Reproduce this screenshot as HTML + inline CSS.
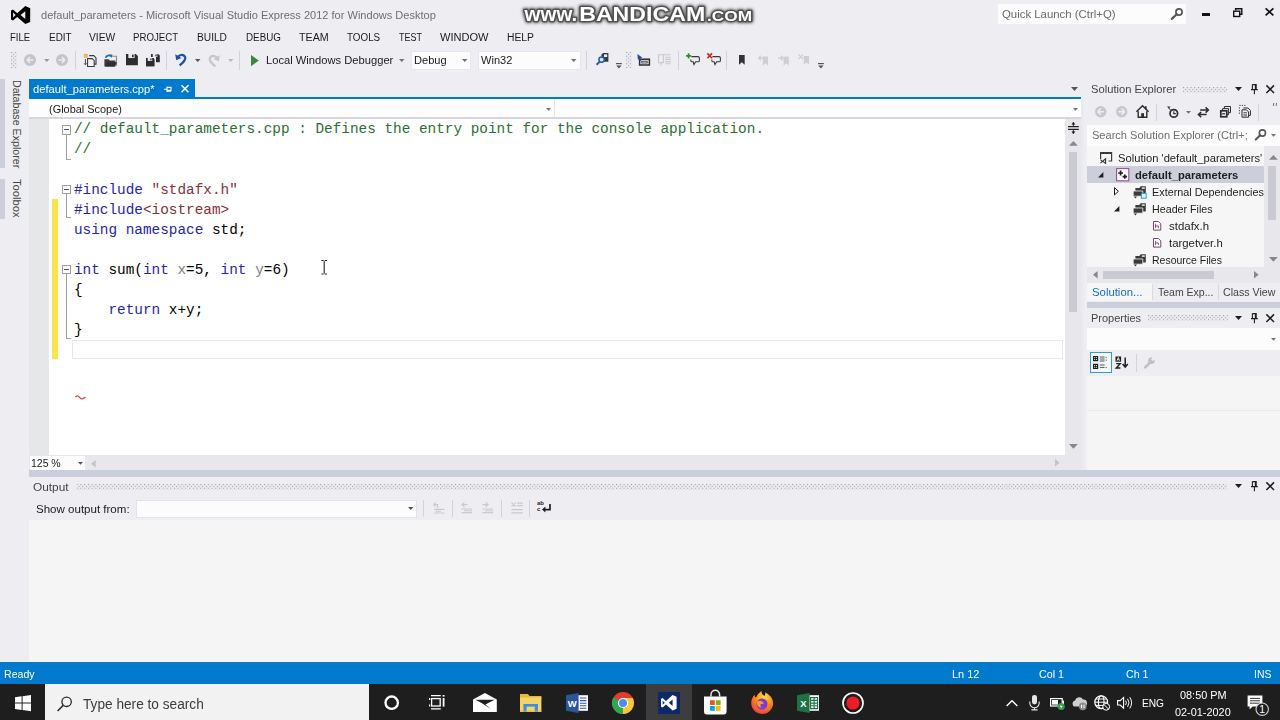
<!DOCTYPE html>
<html><head><meta charset="utf-8"><title>default_parameters - Microsoft Visual Studio Express 2012 for Windows Desktop</title>
<style>
*{box-sizing:border-box;margin:0;padding:0}
html,body{width:1280px;height:720px;overflow:hidden;background:#eeeef2;font-family:"Liberation Sans",sans-serif;font-size:11.25px;color:#1e1e1e}
.a{position:absolute;white-space:nowrap}
.t{position:absolute;white-space:nowrap;line-height:16px;height:16px}
.code{position:absolute;white-space:pre;font-family:"Liberation Mono",monospace;font-size:14.39px;line-height:20px;height:20px;left:73.9px;color:#000}
.kw{color:#2626a8}.cm{color:#2a7032}.st{color:#86303a}.gr{color:#808080}
svg{position:absolute;overflow:visible}
</style></head><body>
<svg style="left:11px;top:5.8px;" width="19.2" height="18.1" viewBox="0 0 19.2 18.1"><path fill="#000" fill-rule="evenodd" d="M14.3,0 L19.2,2.2 V15.9 L14.3,18.1 L6.2,10.9 L2,14.6 L0,13.6 V4.5 L2,3.5 L6.2,7.2 Z M14.3,5.2 L9.6,9.05 L14.3,12.9 Z M2.1,6.6 V11.5 L4.7,9.05 Z"/></svg>
<div class="t" id="title" style="left:41.34px;top:6.95px;font-size:11.7px;color:#6f6f6f;transform-origin:0 0;transform:scaleX(0.9442);">default_parameters - Microsoft Visual Studio Express 2012 for Windows Desktop</div>
<div class="a" style="left:998px;top:3.5px;width:188px;height:20px;background:#fcfcfc;"></div>
<div class="t" id="ql" style="left:1002.12px;top:6.02px;font-size:11.5px;color:#6a6a6a;transform-origin:0 0;transform:scaleX(0.9898);">Quick Launch (Ctrl+Q)</div>
<svg style="left:1171px;top:8px;" width="12" height="11.5" viewBox="0 0 12 11.5"><circle cx="8" cy="4" r="3.1" fill="none" stroke="#555" stroke-width="1.7"/><path d="M5.8,6.2 L0.8,10.9" stroke="#555" stroke-width="2.2" stroke-linecap="round"/></svg>
<div class="a" style="left:1202px;top:13.2px;width:8.2px;height:2.8px;background:#111;"></div>
<svg style="left:1233px;top:8px;" width="9.5" height="9.2" viewBox="0 0 9.5 9.2"><path d="M2.6,2.6V0.7H8.8V6.2H6.8" fill="none" stroke="#111" stroke-width="1.4"/><rect x="0.7" y="3.2" width="6" height="5.3" fill="none" stroke="#111" stroke-width="1.4"/></svg>
<svg style="left:1265px;top:8.4px;" width="9" height="7.8" viewBox="0 0 9 7.8"><path d="M0.6,0.3 L8.4,7.5 M8.4,0.3 L0.6,7.5" stroke="#111" stroke-width="1.7" fill="none"/></svg>
<svg style="left:0px;top:0px;" width="1280" height="30" viewBox="0 0 1280 30"><g font-family="Liberation Sans,sans-serif" font-weight="bold" fill="#fff" stroke="#505050" stroke-width="2.6" stroke-linejoin="round" paint-order="stroke" lengthAdjust="spacingAndGlyphs" style="filter:drop-shadow(0 0 1.5px #555) drop-shadow(0 0 1.5px #888)"><text x="524.6" y="21" font-size="19.5" textLength="52.6" lengthAdjust="spacingAndGlyphs">www.</text><text x="579.2" y="21" font-size="19.5" textLength="126" lengthAdjust="spacingAndGlyphs">BANDICAM</text><text x="707" y="21" font-size="14.4" textLength="45" lengthAdjust="spacingAndGlyphs">.COM</text></g></svg>
<div class="t" id="m0" style="left:9.93px;top:29.35px;font-size:11.25px;color:#1b1b1b;transform-origin:0 0;transform:scaleX(0.8476);">FILE</div>
<div class="t" id="m1" style="left:48.65px;top:29.35px;font-size:11.25px;color:#1b1b1b;transform-origin:0 0;transform:scaleX(0.8851);">EDIT</div>
<div class="t" id="m2" style="left:88.88px;top:29.35px;font-size:11.25px;color:#1b1b1b;transform-origin:0 0;transform:scaleX(0.9119);">VIEW</div>
<div class="t" id="m3" style="left:133.42px;top:29.35px;font-size:11.25px;color:#1b1b1b;transform-origin:0 0;transform:scaleX(0.8600);">PROJECT</div>
<div class="t" id="m4" style="left:196.89px;top:29.35px;font-size:11.25px;color:#1b1b1b;transform-origin:0 0;transform:scaleX(0.9044);">BUILD</div>
<div class="t" id="m5" style="left:245.66px;top:29.35px;font-size:11.25px;color:#1b1b1b;transform-origin:0 0;transform:scaleX(0.8729);">DEBUG</div>
<div class="t" id="m6" style="left:299.36px;top:29.35px;font-size:11.25px;color:#1b1b1b;transform-origin:0 0;transform:scaleX(0.9527);">TEAM</div>
<div class="t" id="m7" style="left:347.41px;top:29.35px;font-size:11.25px;color:#1b1b1b;transform-origin:0 0;transform:scaleX(0.8746);">TOOLS</div>
<div class="t" id="m8" style="left:398.96px;top:29.35px;font-size:11.25px;color:#1b1b1b;transform-origin:0 0;transform:scaleX(0.8025);">TEST</div>
<div class="t" id="m9" style="left:440.09px;top:29.35px;font-size:11.25px;color:#1b1b1b;transform-origin:0 0;transform:scaleX(0.9839);">WINDOW</div>
<div class="t" id="m10" style="left:506.88px;top:29.35px;font-size:11.25px;color:#1b1b1b;transform-origin:0 0;transform:scaleX(0.9183);">HELP</div>
<svg style="left:10.8px;top:52px;" width="5.6" height="16" viewBox="0 0 5.6 16"><defs><pattern id="g1" width="3.75" height="3.75" patternUnits="userSpaceOnUse"><rect x="0" y="0" width="1.1" height="1.1" fill="#9a9aa0"/><rect x="1.87" y="1.87" width="1.1" height="1.1" fill="#9a9aa0"/></pattern></defs><rect width="5.6" height="16" fill="url(#g1)"/></svg>
<svg style="left:24px;top:54.25px;" width="12" height="12" viewBox="-6 -6 12 12"><circle cx="0" cy="0" r="6" fill="#c4c4c8"/><path d="M-3,0 L0.2,-3 M-3,0 L0.2,3 M-3,0 H3.4" stroke="#eeeef2" stroke-width="1.6" fill="none"/></svg>
<svg style="left:43.5px;top:59.1px;" width="5.5" height="3" viewBox="0 0 5.5 3"><path d="M0,0H5.5L2.75,3Z" fill="#9a9a9e"/></svg>
<svg style="left:56px;top:54.25px;" width="12" height="12" viewBox="-6 -6 12 12"><circle cx="0" cy="0" r="6" fill="#c4c4c8"/><path d="M3,0 L-0.2,-3 M3,0 L-0.2,3 M3,0 H-3.4" stroke="#eeeef2" stroke-width="1.6" fill="none"/></svg>
<div class="a" style="left:74.9px;top:51px;width:1px;height:18.5px;background:#d2d2d8;"></div>
<svg style="left:84px;top:53.7px;" width="12.5" height="13" viewBox="0 0 12.5 13"><path d="M0.3,0.3h3v3h-3z" fill="#e8c36a" stroke="#c89b3c" stroke-width="0.6"/><path d="M5.2,1.6 h4.6 l2.2,2.3 v6.2 h-2" fill="none" stroke="#3a3a3a" stroke-width="1.1"/><path d="M3.6,4.6 h4.6 l2,2.1 v5.8 h-6.6 z" fill="#fafafa" stroke="#3a3a3a" stroke-width="1.1"/><path d="M1.4,5 v5.6 M0.2,9.4 l1.2,1.4 l1.2,-1.4" fill="none" stroke="#3a3a3a" stroke-width="0.9"/></svg>
<svg style="left:104.4px;top:53.6px;" width="13.8" height="13" viewBox="0 0 13.8 13"><path d="M8.2,2.2 h4.3 v9.6" fill="none" stroke="#8a8a8a" stroke-width="1.1"/><path d="M0.4,12.6 V5.2 H4.6 L5.8,6.6 H11.4 V12.6 Z" fill="#3a3a3a"/><path d="M1.2,12.6 L3.4,8.2 H13 L10.8,12.6 Z" fill="#2d2d2d"/><path d="M1.6,3.9 a3.3,3.3 0 0 1 5.4,-1.6" fill="none" stroke="#1b6fc2" stroke-width="1.7"/><path d="M5.4,0.2 L8.6,0.8 L7.6,4.0 Z" fill="#1b6fc2"/></svg>
<svg style="left:125.6px;top:54.3px;" width="11.9" height="11.305" viewBox="0 0 11.9 11.305"><path d="M0,0 H9.758 L11.9,2.023 V11.305 H0 Z" fill="#2d2d2d"/><rect x="2.3800000000000003" y="0" width="6.188000000000001" height="4.046" fill="#eeeef2"/><rect x="5.95" y="0.5950000000000001" width="1.6660000000000001" height="2.618" fill="#2d2d2d"/></svg>
<svg style="left:150.6px;top:53.7px;" width="8.8" height="8.36" viewBox="0 0 8.8 8.36"><path d="M0,0 H7.216 L8.8,1.4960000000000002 V8.36 H0 Z" fill="#2d2d2d"/><rect x="1.7600000000000002" y="0" width="4.5760000000000005" height="2.9920000000000004" fill="#eeeef2"/><rect x="4.4" y="0.44000000000000006" width="1.2320000000000002" height="1.9360000000000002" fill="#2d2d2d"/></svg>
<div class="a" style="left:149.3px;top:56.5px;width:1.3px;height:6.5px;background:#eeeef2;"></div>
<svg style="left:145.6px;top:58.1px;" width="8.8" height="8.36" viewBox="0 0 8.8 8.36"><path d="M0,0 H7.216 L8.8,1.4960000000000002 V8.36 H0 Z" fill="#2d2d2d"/><rect x="1.7600000000000002" y="0" width="4.5760000000000005" height="2.9920000000000004" fill="#eeeef2"/><rect x="4.4" y="0.44000000000000006" width="1.2320000000000002" height="1.9360000000000002" fill="#2d2d2d"/></svg>
<div class="a" style="left:145.6px;top:57px;width:10px;height:1.1px;background:#eeeef2;"></div>
<div class="a" style="left:154.4px;top:58.1px;width:1.2px;height:8.9px;background:#eeeef2;"></div>
<svg style="left:145.6px;top:58.3px;" width="8.6" height="8.17" viewBox="0 0 8.6 8.17"><path d="M0,0 H7.052 L8.6,1.462 V8.17 H0 Z" fill="#2d2d2d"/><rect x="1.72" y="0" width="4.4719999999999995" height="2.924" fill="#eeeef2"/><rect x="4.3" y="0.43" width="1.204" height="1.892" fill="#2d2d2d"/></svg>
<div class="a" style="left:165.75px;top:51px;width:1px;height:18.5px;background:#d2d2d8;"></div>
<svg style="left:175px;top:53.3px;" width="12" height="13.2" viewBox="0 0 12 13.2"><path d="M2.4,5.0 C3.4,1.6 8.6,0.6 10.2,4.2 C11.2,7.0 8.0,9.6 4.6,12.4" fill="none" stroke="#1c4fa6" stroke-width="2.2"/><path d="M0.2,1.2 L1.2,7.2 L6.4,5.0 Z" fill="#1c4fa6"/></svg>
<svg style="left:194.75px;top:59.1px;" width="5.5" height="3" viewBox="0 0 5.5 3"><path d="M0,0H5.5L2.75,3Z" fill="#555"/></svg>
<svg style="left:207.6px;top:53.6px;" width="12" height="13" viewBox="0 0 12 13"><path d="M9.6,5.0 C8.6,1.6 3.4,0.6 1.8,4.2 C0.8,7.0 4.0,9.6 7.4,12.4" fill="none" stroke="#c6c6ca" stroke-width="2.2"/><path d="M11.8,1.2 L10.8,7.2 L5.6,5.0 Z" fill="#c6c6ca"/></svg>
<svg style="left:227.85px;top:59.1px;" width="5.5" height="3" viewBox="0 0 5.5 3"><path d="M0,0H5.5L2.75,3Z" fill="#b8b8bd"/></svg>
<div class="a" style="left:239.1px;top:51px;width:1px;height:18.5px;background:#d2d2d8;"></div>
<svg style="left:251.2px;top:54.6px;" width="7.8" height="11.2" viewBox="0 0 7.8 11.2"><path d="M0,0 L7.8,5.6 L0,11.2 Z" fill="#36883a"/></svg>
<div class="t" id="lwd" style="left:266.33px;top:51.80px;font-size:11.4px;color:#1b1b1b;transform-origin:0 0;transform:scaleX(0.9811);">Local Windows Debugger</div>
<svg style="left:399.15px;top:59.1px;" width="5.5" height="3" viewBox="0 0 5.5 3"><path d="M0,0H5.5L2.75,3Z" fill="#717171"/></svg>
<div class="a" style="left:410.6px;top:50.6px;width:60px;height:19.4px;background:#fcfcfc;border:1px solid #e6e6ec;"></div>
<div class="t" id="dbg" style="left:414.23px;top:51.80px;font-size:11.4px;color:#1b1b1b;transform-origin:0 0;transform:scaleX(0.9733);">Debug</div>
<svg style="left:462.25px;top:59.1px;" width="5.5" height="3" viewBox="0 0 5.5 3"><path d="M0,0H5.5L2.75,3Z" fill="#717171"/></svg>
<div class="a" style="left:477.7px;top:50.6px;width:102.9px;height:19.4px;background:#fcfcfc;border:1px solid #e6e6ec;"></div>
<div class="t" id="w32" style="left:480.84px;top:51.80px;font-size:11.4px;color:#1b1b1b;transform-origin:0 0;transform:scaleX(0.9700);">Win32</div>
<svg style="left:571.25px;top:59.1px;" width="5.5" height="3" viewBox="0 0 5.5 3"><path d="M0,0H5.5L2.75,3Z" fill="#717171"/></svg>
<div class="a" style="left:585.75px;top:51px;width:1px;height:18.5px;background:#d2d2d8;"></div>
<svg style="left:595.6px;top:53.4px;" width="12.6" height="12.4" viewBox="0 0 12.6 12.4"><path d="M5.2,1.8 L7.2,0 H12.4 V8.8 H7.4" fill="#3a3a3a"/><rect x="8" y="1.4" width="3.2" height="2.6" fill="#eeeef2"/><circle cx="5.6" cy="6.6" r="2.7" fill="#dfe9f5" stroke="#1b5fb0" stroke-width="1.5"/><path d="M3.8,8.6 L0.6,11.8" stroke="#1b5fb0" stroke-width="2"/></svg>
<svg style="left:615.6px;top:62.8px;" width="5.8" height="5.6" viewBox="0 0 5.8 5.6"><rect x="0" y="0" width="5.8" height="1.2" fill="#555"/><path d="M0.2,2.6 H5.6 L2.9,5.6 Z" fill="#555"/></svg>
<svg style="left:626px;top:52px;" width="5.6" height="16" viewBox="0 0 5.6 16"><defs><pattern id="g2" width="3.75" height="3.75" patternUnits="userSpaceOnUse"><rect x="0" y="0" width="1.1" height="1.1" fill="#9a9aa0"/><rect x="1.87" y="1.87" width="1.1" height="1.1" fill="#9a9aa0"/></pattern></defs><rect width="5.6" height="16" fill="url(#g2)"/></svg>
<svg style="left:637.4px;top:54.2px;" width="13" height="11.6" viewBox="0 0 13 11.6"><rect x="2.6" y="5.2" width="9.8" height="5.8" fill="none" stroke="#2d2d2d" stroke-width="1.5"/><rect x="4.8" y="7.2" width="5.4" height="1.8" fill="#eeeef2" stroke="#2d2d2d" stroke-width="0.8"/><path d="M0.4,0 L5.2,3.6 L3.4,4.2 L4.4,6.4 L3.2,6.9 L2.2,4.7 L0.9,5.9 Z" fill="#1c4fa6"/></svg>
<svg style="left:658px;top:54px;" width="13.4" height="12" viewBox="0 0 13.4 12"><path d="M0.5,0.8 H5.4 V8.6 H0.5 Z M5.4,0.8 H12.6" fill="none" stroke="#cacace" stroke-width="1.1"/><path d="M7.2,3.2H12.8 M7.2,5.4H12.8 M7.2,7.6H12.8 M7.2,9.8H12.8 M3,8.6 V11.4" stroke="#cacace" stroke-width="1.1"/></svg>
<div class="a" style="left:677.5px;top:51px;width:1px;height:18.5px;background:#d2d2d8;"></div>
<svg style="left:685.6px;top:53.4px;" width="14" height="12.4" viewBox="0 0 14 12.4"><path d="M2.6,0.2 V5.4 M0,2.8 H5.2" stroke="#2e8b2e" stroke-width="1.7"/><path d="M5.4,3.6 H12 Q13.4,3.6 13.4,5 V7.4 Q13.4,8.8 12,8.8 H9.6 L8,11.6 L7.2,8.8 H6.2 Q4.8,8.8 4.8,7.4 V6.4" fill="none" stroke="#3a3a3a" stroke-width="1.1"/></svg>
<svg style="left:706.9px;top:53.4px;" width="14" height="12.4" viewBox="0 0 14 12.4"><path d="M0.4,0.4 L5,5.2 M5,0.4 L0.4,5.2" stroke="#c0281c" stroke-width="1.6"/><path d="M5.4,3.6 H12 Q13.4,3.6 13.4,5 V7.4 Q13.4,8.8 12,8.8 H9.6 L8,11.6 L7.2,8.8 H6.2 Q4.8,8.8 4.8,7.4 V6.4" fill="none" stroke="#3a3a3a" stroke-width="1.1"/></svg>
<div class="a" style="left:726.4px;top:51px;width:1px;height:18.5px;background:#d2d2d8;"></div>
<svg style="left:738.8px;top:55px;" width="5.7" height="9.8" viewBox="0 0 5.7 9.8"><path d="M0,0 H5.7 V9.8 L2.85,7.200000000000001 L0,9.8 Z" fill="#333"/></svg>
<svg style="left:758px;top:54.6px;" width="10.4" height="10.6" viewBox="0 0 10.4 10.6"><path d="M4.8,1.6 H10 V10.4 L7.4,8.2 L4.8,10.4 Z" fill="#cfcfd3"/><path d="M5.4,3 H0.8 M2.8,0.8 L0.6,3 L2.8,5.2" stroke="#cfcfd3" stroke-width="1.3" fill="none"/></svg>
<svg style="left:777.6px;top:54.6px;" width="11.2" height="10.6" viewBox="0 0 11.2 10.6"><path d="M5.6,1.6 H10.8 V10.4 L8.2,8.2 L5.6,10.4 Z" fill="#cfcfd3"/><path d="M0.2,3 H5 M3,0.8 L5.2,3 L3,5.2" stroke="#cfcfd3" stroke-width="1.3" fill="none"/></svg>
<svg style="left:798px;top:54.2px;" width="11.4" height="11" viewBox="0 0 11.4 11"><path d="M5.8,2 H11 V10.8 L8.4,8.6 L5.8,10.8 Z" fill="#cfcfd3"/><path d="M0.4,0.4 L5,5 M5,0.4 L0.4,5" stroke="#cfcfd3" stroke-width="1.3" fill="none"/></svg>
<svg style="left:817.6px;top:62.8px;" width="5.8" height="5.6" viewBox="0 0 5.8 5.6"><rect x="0" y="0" width="5.8" height="1.2" fill="#555"/><path d="M0.2,2.6 H5.6 L2.9,5.6 Z" fill="#555"/></svg>
<div class="a" style="left:0px;top:79px;width:5.4px;height:88.6px;background:#cccedb;"></div>
<div class="a" style="left:0px;top:179px;width:5.4px;height:39.6px;background:#cccedb;"></div>
<div class="t" id="dbx" style="left:24.95px;top:79.56px;font-size:11.4px;color:#444;transform-origin:0 0;transform:rotate(90deg) scaleX(0.9357);">Database Explorer</div>
<div class="t" id="tbx" style="left:24.95px;top:178.72px;font-size:11.4px;color:#444;transform-origin:0 0;transform:rotate(90deg) scaleX(0.9869);">Toolbox</div>
<div class="a" style="left:29.4px;top:79px;width:165.2px;height:19px;background:#007acc;"></div>
<div class="a" style="left:29.4px;top:96.9px;width:1051.2px;height:2px;background:#007acc;"></div>
<div class="t" id="tab" style="left:33.23px;top:81.05px;font-size:11.4px;color:#fff;transform-origin:0 0;transform:scaleX(0.9801);">default_parameters.cpp*</div>
<svg style="left:164px;top:85.6px;" width="7.6" height="6.6" viewBox="0 0 7.6 6.6"><path d="M0,3.3 H3 M3,0.6 V6 M3,1.4 H7 V4.4 H3 M3,5.1 H7" fill="none" stroke="#fff" stroke-width="1.1"/></svg>
<svg style="left:181.2px;top:84.8px;" width="8" height="7.6" viewBox="0 0 8 7.6"><path d="M0.5,0.3 L7.5,7.3 M7.5,0.3 L0.5,7.3" stroke="#fff" stroke-width="1.5"/></svg>
<svg style="left:1071.25px;top:87.2px;" width="7" height="4" viewBox="0 0 7 4"><path d="M0,0H7L3.5,4Z" fill="#555"/></svg>
<div class="a" style="left:29.4px;top:98.9px;width:1051.2px;height:18.5px;background:#fdfdfd;"></div>
<div class="a" style="left:29.4px;top:117.4px;width:1051.2px;height:1.2px;background:#d6d6de;"></div>
<div class="a" style="left:553.6px;top:100px;width:1.8px;height:17px;background:#e4e4ea;"></div>
<div class="t" id="gs" style="left:48.84px;top:101.10px;font-size:11.25px;color:#1b1b1b;transform-origin:0 0;transform:scaleX(0.9715);">(Global Scope)</div>
<svg style="left:546.3px;top:107.9px;" width="5" height="2.8" viewBox="0 0 5 2.8"><path d="M0,0H5L2.5,2.8Z" fill="#717171"/></svg>
<svg style="left:1073.4px;top:107.9px;" width="5" height="2.8" viewBox="0 0 5 2.8"><path d="M0,0H5L2.5,2.8Z" fill="#717171"/></svg>
<div class="a" style="left:29.4px;top:118.6px;width:1035.6px;height:336px;background:#ffffff;"></div>
<div class="a" style="left:29.4px;top:118.6px;width:19.6px;height:336px;background:#e6e7e8;"></div>
<div class="a" style="left:1065px;top:118.6px;width:15.6px;height:336px;background:#e8e8ec;"></div>
<div class="a" style="left:51.8px;top:199.4px;width:6.2px;height:159.8px;background:#f7e54f;"></div>
<div class="a" style="left:72px;top:340px;width:991.4px;height:18.8px;background:transparent;border:1.6px solid #e6e6f0;"></div>
<div class="a" style="left:61.6px;top:125px;width:9.6px;height:9.6px;background:#fff;border:1px solid #a0a0a0;"></div>
<div class="a" style="left:63.6px;top:129.3px;width:5.6px;height:1px;background:#555;"></div>
<div class="a" style="left:66.3px;top:134.6px;width:1px;height:25px;background:#a0a0a0;"></div>
<div class="a" style="left:66.3px;top:158.6px;width:5.1px;height:1px;background:#a0a0a0;"></div>
<div class="a" style="left:61.6px;top:184.8px;width:9.6px;height:9.6px;background:#fff;border:1px solid #a0a0a0;"></div>
<div class="a" style="left:63.6px;top:189.1px;width:5.6px;height:1px;background:#555;"></div>
<div class="a" style="left:66.3px;top:194.4px;width:1px;height:24px;background:#a0a0a0;"></div>
<div class="a" style="left:66.3px;top:217.4px;width:5.1px;height:1px;background:#a0a0a0;"></div>
<div class="a" style="left:61.6px;top:264.6px;width:9.6px;height:9.6px;background:#fff;border:1px solid #a0a0a0;"></div>
<div class="a" style="left:63.6px;top:268.9px;width:5.6px;height:1px;background:#555;"></div>
<div class="a" style="left:66.3px;top:274.2px;width:1px;height:64.8px;background:#a0a0a0;"></div>
<div class="a" style="left:66.3px;top:338px;width:5.1px;height:1px;background:#a0a0a0;"></div>
<div class="code cm" id="c1" style="top:119.16px">// default_parameters.cpp : Defines the entry point for the console application.</div>
<div class="code cm" id="c2" style="top:139.29px">//</div>
<div class="code " id="c4" style="top:179.55px"><span class="kw">#include</span> <span class="st">"stdafx.h"</span></div>
<div class="code " id="c5" style="top:199.68px"><span class="kw">#include</span><span class="st">&lt;iostream&gt;</span></div>
<div class="code " id="c6" style="top:219.81px"><span class="kw">using</span> <span class="kw">namespace</span> std;</div>
<div class="code " id="c8" style="top:260.07px"><span class="kw">int</span> sum(<span class="kw">int</span> <span class="gr">x</span>=5, <span class="kw">int</span> <span class="gr">y</span>=6)</div>
<div class="code " id="c9" style="top:280.20px">{</div>
<div class="code " id="c10" style="top:300.33px">    <span class="kw">return</span> x+y;</div>
<div class="code " id="c11" style="top:320.46px">}</div>
<svg style="left:75px;top:394.6px;" width="11" height="5.4" viewBox="0 0 11 5.4"><path d="M0.3,2.2 Q2.4,-0.4 4.6,2.4 T9,3 L10.6,2.2" fill="none" stroke="#e0443c" stroke-width="1.3"/></svg>
<svg style="left:321.2px;top:260px;" width="6.4" height="14.6" viewBox="0 0 6.4 14.6"><path d="M0.4,0.5 H2.6 M3.8,0.5 H6 M0.4,14 H2.6 M3.8,14 H6 M3.2,1 V13.6" stroke="#222" stroke-width="1.1" fill="none"/></svg>
<svg style="left:1068px;top:121.8px;" width="10.8" height="12" viewBox="0 0 10.8 12"><path d="M0,4.6 H10.8 M0,7.4 H10.8 M5.4,0.6 V3.8 M5.4,8.2 V11.4" stroke="#222" stroke-width="1.2"/><path d="M3.4,2.6 L5.4,0 L7.4,2.6 Z M3.4,9.4 L5.4,12 L7.4,9.4 Z" fill="#222"/></svg>
<svg style="left:1069px;top:141.2px;" width="8.8" height="4.8" viewBox="0 0 8.8 4.8"><path d="M0,4.8 L4.4,0 L8.8,4.8 Z" fill="#86868c"/></svg>
<div class="a" style="left:1069.4px;top:151.5px;width:7.8px;height:160.9px;background:#c9cad2;"></div>
<svg style="left:1069px;top:443.8px;" width="8.8" height="4.8" viewBox="0 0 8.8 4.8"><path d="M0,0 L4.4,4.8 L8.8,0 Z" fill="#86868c"/></svg>
<div class="a" style="left:29.4px;top:454.6px;width:1051.2px;height:15.8px;background:#e8e8ec;"></div>
<div class="a" style="left:29.6px;top:456px;width:55.4px;height:14.4px;background:#fcfcfc;"></div>
<div class="t" id="zm" style="left:31.37px;top:455.10px;font-size:11.25px;color:#1b1b1b;transform-origin:0 0;transform:scaleX(0.9294);">125 %</div>
<svg style="left:78px;top:461.8px;" width="5" height="2.8" viewBox="0 0 5 2.8"><path d="M0,0H5L2.5,2.8Z" fill="#555"/></svg>
<svg style="left:90.6px;top:459.6px;" width="4.6" height="7.4" viewBox="0 0 4.6 7.4"><path d="M4.6,0 L0,3.7 L4.6,7.4 Z" fill="#c2c3cb"/></svg>
<svg style="left:1055px;top:459.2px;" width="4.6" height="7.4" viewBox="0 0 4.6 7.4"><path d="M0,0 L4.6,3.7 L0,7.4 Z" fill="#c2c3cb"/></svg>
<div class="a" style="left:1081px;top:99px;width:6px;height:372px;background:linear-gradient(90deg,#e8e8ee,#f0f0f4);"></div>
<div class="a" style="left:29.4px;top:470.4px;width:1250.6px;height:6.6px;background:#cccedb;"></div>
<div class="t" id="out" style="left:33.19px;top:478.55px;font-size:11.4px;color:#444;transform-origin:0 0;transform:scaleX(1.0385);">Output</div>
<svg style="left:76px;top:483.6px;" width="1151.5" height="5.6" viewBox="0 0 1151.5 5.6"><defs><pattern id="g3" width="3.75" height="3.75" patternUnits="userSpaceOnUse"><rect x="0" y="0" width="1.1" height="1.1" fill="#9a9aa0"/><rect x="1.87" y="1.87" width="1.1" height="1.1" fill="#9a9aa0"/></pattern></defs><rect width="1151.5" height="5.6" fill="url(#g3)"/></svg>
<svg style="left:1235px;top:484.2px;" width="7" height="4" viewBox="0 0 7 4"><path d="M0,0H7L3.5,4Z" fill="#1e1e1e"/></svg>
<svg style="left:1250.6px;top:481.4px;" width="6.8" height="10.4" viewBox="0 0 6.8 10.4"><path d="M1.4,0.6 H5.2 V5.4 M1.4,0.6 V5.4 M0,5.6 H6.8 M3.4,5.6 V10.2 M4.4,0.6 V5.4" fill="none" stroke="#1e1e1e" stroke-width="1.1"/></svg>
<svg style="left:1265.6px;top:482.2px;" width="8.4" height="8.4" viewBox="0 0 8.4 8.4"><path d="M0.4,0.4 L8.0,8.0 M8.0,0.4 L0.4,8.0" stroke="#1e1e1e" stroke-width="1.5"/></svg>
<div class="t" id="sof" style="left:35.71px;top:501.10px;font-size:11.25px;color:#1b1b1b;transform-origin:0 0;transform:scaleX(1.0250);">Show output from:</div>
<div class="a" style="left:136px;top:500.4px;width:281.2px;height:17.2px;background:#fcfcfc;border:1px solid #e2e2e8;"></div>
<svg style="left:408.25px;top:507.1px;" width="5.5" height="3" viewBox="0 0 5.5 3"><path d="M0,0H5.5L2.75,3Z" fill="#555"/></svg>
<div class="a" style="left:423px;top:500px;width:1px;height:16.5px;background:#d2d2d8;"></div>
<svg style="left:433.4px;top:502.4px;" width="11.6" height="11.6" viewBox="0 0 11.6 11.6"><path d="M2.4,0.6 L0.8,2.6 L2.4,4.6 M0.8,2.6 H4.6 V6 M1.2,7.4 H11.4 M2.6,9.2 H8 M1.2,11 H11.4" fill="none" stroke="#c9c9ce" stroke-width="1.1"/></svg>
<div class="a" style="left:451.7px;top:500px;width:1px;height:16.5px;background:#d2d2d8;"></div>
<svg style="left:461.4px;top:502.4px;" width="11.2" height="11.2" viewBox="0 0 11.2 11.2"><path d="M3.4,0.4 L0.8,2.6 L3.4,4.8 M0.8,2.6 H6.4 M0.4,7 H11 M3,8.8 H11 M0.4,10.6 H11" fill="none" stroke="#c9c9ce" stroke-width="1.1"/></svg>
<svg style="left:482px;top:502.4px;" width="11.2" height="11.2" viewBox="0 0 11.2 11.2"><path d="M3.6,0.4 L6.2,2.6 L3.6,4.8 M0.4,2.6 H6.2 M0.4,7 H11 M3,8.8 H11 M0.4,10.6 H11" fill="none" stroke="#c9c9ce" stroke-width="1.1"/></svg>
<div class="a" style="left:501px;top:500px;width:1px;height:16.5px;background:#d2d2d8;"></div>
<svg style="left:510.6px;top:502.2px;" width="12" height="11.6" viewBox="0 0 12 11.6"><path d="M0.4,0.4 L4.8,4.6 M4.8,0.4 L0.4,4.6 M6,1.2 H11.8 M6,3.6 H11.8 M0.4,7.6 H11.8 M0.4,10.8 H11.8" fill="none" stroke="#c9c9ce" stroke-width="1.2"/></svg>
<div class="a" style="left:528.9px;top:500px;width:1px;height:16.5px;background:#d2d2d8;"></div>
<div class="t" id="abc" style="left:537px;top:501.2px;font-size:6px;line-height:5.4px;height:12px;font-weight:bold;color:#1e1e1e;white-space:pre">ab
c</div>
<svg style="left:541.6px;top:504.2px;" width="9.2" height="9.2" viewBox="0 0 9.2 9.2"><path d="M8,0 V5.6 H2.2" fill="none" stroke="#1e1e1e" stroke-width="1.7"/><path d="M0,5.6 L3.4,2.6 V8.6 Z" fill="#1e1e1e"/></svg>
<div class="a" style="left:29.4px;top:519.6px;width:1250.6px;height:142.8px;background:#f5f5f5;"></div>
<div class="t" id="se" style="left:1090.83px;top:81.05px;font-size:11.4px;color:#444;transform-origin:0 0;transform:scaleX(0.9815);">Solution Explorer</div>
<svg style="left:1183px;top:86.6px;" width="44.5" height="5.6" viewBox="0 0 44.5 5.6"><defs><pattern id="g4" width="3.75" height="3.75" patternUnits="userSpaceOnUse"><rect x="0" y="0" width="1.1" height="1.1" fill="#9a9aa0"/><rect x="1.87" y="1.87" width="1.1" height="1.1" fill="#9a9aa0"/></pattern></defs><rect width="44.5" height="5.6" fill="url(#g4)"/></svg>
<svg style="left:1234.9px;top:87.4px;" width="7" height="4" viewBox="0 0 7 4"><path d="M0,0H7L3.5,4Z" fill="#1e1e1e"/></svg>
<svg style="left:1250.6px;top:84.4px;" width="6.8" height="10.4" viewBox="0 0 6.8 10.4"><path d="M1.4,0.6 H5.2 V5.4 M1.4,0.6 V5.4 M0,5.6 H6.8 M3.4,5.6 V10.2 M4.4,0.6 V5.4" fill="none" stroke="#1e1e1e" stroke-width="1.1"/></svg>
<svg style="left:1265.6px;top:85.2px;" width="8.4" height="8.4" viewBox="0 0 8.4 8.4"><path d="M0.4,0.4 L8.0,8.0 M8.0,0.4 L0.4,8.0" stroke="#1e1e1e" stroke-width="1.5"/></svg>
<svg style="left:1095.1px;top:106.3px;" width="11.4" height="11.4" viewBox="-5.7 -5.7 11.4 11.4"><circle cx="0" cy="0" r="5.7" fill="#c8c8cc"/><path d="M-3,0 L0.2,-3 M-3,0 L0.2,3 M-3,0 H3.4" stroke="#eeeef2" stroke-width="1.6" fill="none"/></svg>
<svg style="left:1116px;top:106.3px;" width="11.4" height="11.4" viewBox="-5.7 -5.7 11.4 11.4"><circle cx="0" cy="0" r="5.7" fill="#c8c8cc"/><path d="M3,0 L-0.2,-3 M3,0 L-0.2,3 M3,0 H-3.4" stroke="#eeeef2" stroke-width="1.6" fill="none"/></svg>
<svg style="left:1136px;top:105.4px;" width="13" height="12.8" viewBox="0 0 13 12.8"><path d="M0.4,6.8 L6.5,0.8 L12.6,6.8" fill="none" stroke="#2d2d2d" stroke-width="1.5"/><path d="M2.2,6.2 V12.2 H10.8 V6.2" fill="none" stroke="#2d2d2d" stroke-width="1.4"/><rect x="5.2" y="8.2" width="2.8" height="4" fill="#2d2d2d"/><rect x="9" y="1.2" width="1.6" height="3" fill="#2d2d2d"/></svg>
<div class="a" style="left:1156.2px;top:103.5px;width:1px;height:17px;background:#d2d2d8;"></div>
<svg style="left:1166.6px;top:105.6px;" width="11.6" height="12.2" viewBox="0 0 11.6 12.2"><circle cx="6.8" cy="7.4" r="3.8" fill="none" stroke="#2d2d2d" stroke-width="1.7"/><path d="M6.8,5.2 V7.6 H8.8" fill="none" stroke="#2d2d2d" stroke-width="1.1"/><path d="M0,0.4 H3.6 L1.8,2.6 Z" fill="#2d2d2d"/><path d="M1.8,2 L3.4,4" stroke="#2d2d2d" stroke-width="1"/></svg>
<svg style="left:1185.5px;top:111.4px;" width="5" height="2.8" viewBox="0 0 5 2.8"><path d="M0,0H5L2.5,2.8Z" fill="#717171"/></svg>
<svg style="left:1198.4px;top:106.8px;" width="10.8" height="10.4" viewBox="0 0 10.8 10.4"><path d="M2.2,3 H10.4 M7.6,0.4 L10.4,3 L7.6,5.6 M8.6,7.6 H0.4 M3.2,5 L0.4,7.6 L3.2,10.2" fill="none" stroke="#2d2d2d" stroke-width="1.5"/></svg>
<svg style="left:1219.6px;top:105.8px;" width="11" height="11.6" viewBox="0 0 11 11.6"><path d="M4.4,2.2 V0.5 H10.5 V6.6 H8.8 M2.6,4.2 V2.6 H8.6 V8.6 H7" fill="none" stroke="#2d2d2d" stroke-width="1"/><rect x="0.8" y="4.8" width="6" height="6" fill="none" stroke="#2d2d2d" stroke-width="1.7"/><path d="M2,7.8 H5.2" stroke="#2d2d2d" stroke-width="1.2"/></svg>
<svg style="left:1238.6px;top:105.4px;" width="12.4" height="12.6" viewBox="0 0 12.4 12.6"><path d="M0.4,0.4 H1.6 M2.8,0.4 H4 M5.2,0.4 H6.4 M0.4,2.4 V3.6 M0.4,5 V6.2 M0.4,7.6 V8.8" stroke="#2d2d2d" stroke-width="0.9"/><path d="M4.4,3 H9 L11.4,5.4 V10.4 H10" fill="none" stroke="#2d2d2d" stroke-width="1"/><path d="M3,4.8 H7.4 L9.6,7 V12.2 H3 Z" fill="none" stroke="#2d2d2d" stroke-width="1"/><path d="M4.4,7.6 H8 M4.4,9.2 H8 M4.4,10.8 H8" stroke="#2d2d2d" stroke-width="0.7"/></svg>
<div class="a" style="left:1257.5px;top:103.5px;width:1px;height:17px;background:#d2d2d8;"></div>
<svg style="left:1272.6px;top:103px;" width="4.4" height="3" viewBox="0 0 4.4 3"><path d="M0.8,0 L0.4,3 M3.6,0 L3.2,3" stroke="#7a7a80" stroke-width="1.1"/></svg>
<div class="a" style="left:1087px;top:125px;width:193px;height:20.8px;background:#fcfcfc;"></div>
<div class="t" id="sse" style="left:1091.54px;top:127.25px;font-size:11.4px;color:#6d6d6d;transform-origin:0 0;transform:scaleX(0.9703);">Search Solution Explorer (Ctrl+;</div>
<svg style="left:1254.6px;top:129px;" width="11.4" height="11.4" viewBox="0 0 11.4 11.4"><circle cx="7.4" cy="4" r="3.1" fill="none" stroke="#555" stroke-width="1.6"/><path d="M5.2,6.2 L0.8,10.6" stroke="#555" stroke-width="2.1" stroke-linecap="round"/></svg>
<svg style="left:1271.1px;top:134.2px;" width="5" height="2.8" viewBox="0 0 5 2.8"><path d="M0,0H5L2.5,2.8Z" fill="#717171"/></svg>
<div class="a" style="left:1087px;top:145.8px;width:177px;height:121.2px;background:#f6f6f6;"></div>
<div class="a" style="left:1264px;top:145.8px;width:16px;height:121.2px;background:#e8e8ec;"></div>
<div class="a" style="left:1087px;top:166.3px;width:177px;height:17px;background:#cccedb;"></div>
<div class="t" id="r1" style="left:1118.13px;top:150.18px;font-size:11.3px;color:#1e1e1e;transform-origin:0 0;transform:scaleX(0.9898);">Solution 'default_parameters'</div>
<div class="t" id="r2" style="left:1134.73px;top:167.08px;font-size:11.3px;color:#1e1e1e;transform-origin:0 0;transform:scaleX(0.9915);font-weight:bold;">default_parameters</div>
<div class="t" id="r3" style="left:1151.95px;top:183.98px;font-size:11.3px;color:#1e1e1e;transform-origin:0 0;transform:scaleX(0.9579);">External Dependencies</div>
<div class="t" id="r4" style="left:1151.96px;top:200.88px;font-size:11.3px;color:#1e1e1e;transform-origin:0 0;transform:scaleX(0.9475);">Header Files</div>
<div class="t" id="r5" style="left:1168.91px;top:217.78px;font-size:11.3px;color:#1e1e1e;transform-origin:0 0;transform:scaleX(1.0129);">stdafx.h</div>
<div class="t" id="r6" style="left:1168.92px;top:234.68px;font-size:11.3px;color:#1e1e1e;transform-origin:0 0;transform:scaleX(1.0070);">targetver.h</div>
<div class="t" id="r7" style="left:1151.97px;top:251.58px;font-size:11.3px;color:#1e1e1e;transform-origin:0 0;transform:scaleX(0.9285);">Resource Files</div>
<div class="a" style="left:1264px;top:184px;width:16px;height:17px;background:#e8e8ec;"></div>
<svg style="left:1099.6px;top:152px;" width="12.4" height="11.6" viewBox="0 0 12.4 11.6"><path d="M0.6,7 V0.6 H11.6 V9 H8.6" fill="none" stroke="#3a3a3a" stroke-width="1.2"/><path d="M0.6,1.2 H11.6" stroke="#3a3a3a" stroke-width="1.6"/><path d="M0.4,7.6 L2.4,9.4 L0.4,11.2 M5.6,6.8 V11.4 L2.6,9.3 Z" fill="none" stroke="#3a3a3a" stroke-width="1.1"/></svg>
<svg style="left:1098.2px;top:171.8px;" width="5.4" height="5.4" viewBox="0 0 5.4 5.4"><path d="M5.4,0 V5.4 H0 Z" fill="#1e1e1e"/></svg>
<svg style="left:1116px;top:168.2px;" width="13.4" height="13.4" viewBox="0 0 13.4 13.4"><rect x="0.6" y="0.6" width="12.2" height="12.2" fill="#fff" stroke="#9b4f96" stroke-width="1.1"/><path d="M4.6,2.6 V7.4 M2.2,5 H7 M8.8,6.4 V10.8 M6.6,8.6 H11" stroke="#1e1e1e" stroke-width="1.7"/></svg>
<svg style="left:1114.4px;top:187.4px;" width="5" height="8.6" viewBox="0 0 5 8.6"><path d="M0.5,0.6 L4.4,4.3 L0.5,8 Z" fill="#f6f6f6" stroke="#1e1e1e" stroke-width="1"/></svg>
<svg style="left:1133px;top:185px;" width="13.6" height="13.6" viewBox="0 0 13.6 13.6"><path d="M2.4,3 H6.4 L7.6,1.2 H12.8 V9.4 H2.4 Z" fill="#3a3a3a"/><rect x="8.8" y="2.4" width="3" height="1.4" fill="#f6f6f6"/><path d="M0.2,6 H9.8 V11.2 H0.2 Z" fill="#3a3a3a" stroke="#f6f6f6" stroke-width="0.8"/><path d="M0.8,11.6 H4 L2.4,13.4 Z" fill="#3a3a3a"/><rect x="8.4" y="8.4" width="4.8" height="4.8" fill="#dff1fb" stroke="#2b9fd8" stroke-width="1"/></svg>
<svg style="left:1114px;top:205.6px;" width="5.4" height="5.4" viewBox="0 0 5.4 5.4"><path d="M5.4,0 V5.4 H0 Z" fill="#1e1e1e"/></svg>
<svg style="left:1133px;top:202px;" width="13.6" height="13.6" viewBox="0 0 13.6 13.6"><path d="M2.4,3 H6.4 L7.6,1.2 H12.8 V9.4 H2.4 Z" fill="#3a3a3a"/><rect x="8.8" y="2.4" width="3" height="1.4" fill="#f6f6f6"/><path d="M0.2,6 H9.8 V11.2 H0.2 Z" fill="#3a3a3a" stroke="#f6f6f6" stroke-width="0.8"/><path d="M0.8,11.6 H4 L2.4,13.4 Z" fill="#3a3a3a"/></svg>
<svg style="left:1152.8px;top:221px;" width="8.4" height="9.6" viewBox="0 0 8.4 9.6"><path d="M0.5,0.5 H5.4 L7.8,2.9 V9.1 H0.5 Z" fill="#fff" stroke="#6a4a6a" stroke-width="1"/><path d="M2.6,2.8 V7.2 M2.6,5 H5.4 V7.2" fill="none" stroke="#8a3a7a" stroke-width="0.9"/></svg>
<svg style="left:1152.8px;top:238px;" width="8.4" height="9.6" viewBox="0 0 8.4 9.6"><path d="M0.5,0.5 H5.4 L7.8,2.9 V9.1 H0.5 Z" fill="#fff" stroke="#6a4a6a" stroke-width="1"/><path d="M2.6,2.8 V7.2 M2.6,5 H5.4 V7.2" fill="none" stroke="#8a3a7a" stroke-width="0.9"/></svg>
<svg style="left:1133px;top:253px;" width="13.6" height="13.6" viewBox="0 0 13.6 13.6"><path d="M2.4,3 H6.4 L7.6,1.2 H12.8 V9.4 H2.4 Z" fill="#3a3a3a"/><rect x="8.8" y="2.4" width="3" height="1.4" fill="#f6f6f6"/><path d="M0.2,6 H9.8 V11.2 H0.2 Z" fill="#3a3a3a" stroke="#f6f6f6" stroke-width="0.8"/><path d="M0.8,11.6 H4 L2.4,13.4 Z" fill="#3a3a3a"/></svg>
<div class="a" style="left:1087px;top:266.6px;width:193px;height:16.4px;background:#e8e8ec;"></div>
<svg style="left:1269px;top:155.2px;" width="8.8" height="4.8" viewBox="0 0 8.8 4.8"><path d="M0,4.8 L4.4,0 L8.8,4.8 Z" fill="#86868c"/></svg>
<div class="a" style="left:1268px;top:166px;width:7.8px;height:53.6px;background:#c9cad2;"></div>
<svg style="left:1269px;top:256.6px;" width="8.8" height="4.8" viewBox="0 0 8.8 4.8"><path d="M0,0 L4.4,4.8 L8.8,0 Z" fill="#86868c"/></svg>
<svg style="left:1093px;top:271.4px;" width="4.6" height="7.6" viewBox="0 0 4.6 7.6"><path d="M4.6,0 L0,3.8 L4.6,7.6 Z" fill="#86868c"/></svg>
<div class="a" style="left:1103px;top:271.4px;width:110.8px;height:8px;background:#c9cad2;"></div>
<svg style="left:1253.6px;top:271.4px;" width="4.6" height="7.6" viewBox="0 0 4.6 7.6"><path d="M0,0 L4.6,3.8 L0,7.6 Z" fill="#86868c"/></svg>
<div class="a" style="left:1087px;top:283px;width:65px;height:18px;background:#f5f5f5;"></div>
<div class="t" id="t1" style="left:1091.52px;top:283.88px;font-size:11.3px;color:#0e70c0;transform-origin:0 0;transform:scaleX(1.0042);">Solution...</div>
<div class="a" style="left:1151.9px;top:284px;width:1px;height:16px;background:#d8d8de;"></div>
<div class="t" id="t2" style="left:1157.67px;top:283.88px;font-size:11.3px;color:#444;transform-origin:0 0;transform:scaleX(0.9297);">Team Exp...</div>
<div class="a" style="left:1217.5px;top:284px;width:1px;height:16px;background:#d8d8de;"></div>
<div class="t" id="t3" style="left:1223.16px;top:283.88px;font-size:11.3px;color:#444;transform-origin:0 0;transform:scaleX(0.9426);">Class View</div>
<div class="a" style="left:1087px;top:301.6px;width:193px;height:6.4px;background:#cccedb;"></div>
<div class="t" id="pr" style="left:1090.84px;top:309.75px;font-size:11.4px;color:#444;transform-origin:0 0;transform:scaleX(0.9653);">Properties</div>
<svg style="left:1147.5px;top:315.4px;" width="80.6" height="5.6" viewBox="0 0 80.6 5.6"><defs><pattern id="g5" width="3.75" height="3.75" patternUnits="userSpaceOnUse"><rect x="0" y="0" width="1.1" height="1.1" fill="#9a9aa0"/><rect x="1.87" y="1.87" width="1.1" height="1.1" fill="#9a9aa0"/></pattern></defs><rect width="80.6" height="5.6" fill="url(#g5)"/></svg>
<svg style="left:1234.9px;top:316.2px;" width="7" height="4" viewBox="0 0 7 4"><path d="M0,0H7L3.5,4Z" fill="#1e1e1e"/></svg>
<svg style="left:1250.6px;top:313.2px;" width="6.8" height="10.4" viewBox="0 0 6.8 10.4"><path d="M1.4,0.6 H5.2 V5.4 M1.4,0.6 V5.4 M0,5.6 H6.8 M3.4,5.6 V10.2 M4.4,0.6 V5.4" fill="none" stroke="#1e1e1e" stroke-width="1.1"/></svg>
<svg style="left:1265.6px;top:314px;" width="8.4" height="8.4" viewBox="0 0 8.4 8.4"><path d="M0.4,0.4 L8.0,8.0 M8.0,0.4 L0.4,8.0" stroke="#1e1e1e" stroke-width="1.5"/></svg>
<div class="a" style="left:1087px;top:328px;width:193px;height:22px;background:#fcfcfc;"></div>
<svg style="left:1271.2px;top:337.8px;" width="5" height="2.8" viewBox="0 0 5 2.8"><path d="M0,0H5L2.5,2.8Z" fill="#717171"/></svg>
<div class="a" style="left:1090px;top:352px;width:21.8px;height:20.8px;background:#f4f8fc;border:1px solid #3399dd;"></div>
<svg style="left:1093.4px;top:355.6px;" width="14.6" height="13.6" viewBox="0 0 14.6 13.6"><rect x="0.6" y="0.6" width="4" height="4" fill="#fff" stroke="#1e1e1e" stroke-width="1.2"/><rect x="0.6" y="8.4" width="4" height="4" fill="#fff" stroke="#1e1e1e" stroke-width="1.2"/><path d="M1.2,2.6 H4 M2.6,1.2 V4 M1.2,10.4 H4 M2.6,9 V11.8" stroke="#1e1e1e" stroke-width="1"/><path d="M6.8,1 H11.6 M6.8,3 H11.6 M6.8,5 H11.6 M6.8,9 H11.6 M6.8,11.4 H11.6" stroke="#555" stroke-width="1"/><path d="M13.2,1 V2.2 M13.2,3.6 V4.8 M13.2,11 V12.2" stroke="#555" stroke-width="1"/></svg>
<svg style="left:1115px;top:356px;" width="14" height="13" viewBox="0 0 14 13"><rect x="0.5" y="0.5" width="5.6" height="5.2" fill="#1e1e1e"/><path d="M2,4.8 L3.3,1.4 L4.6,4.8 M2.5,3.7 H4.1" fill="none" stroke="#fff" stroke-width="0.8"/><path d="M1.2,7.6 H5.2 L1.2,12 H5.4" fill="none" stroke="#1e1e1e" stroke-width="1.4"/><path d="M10.2,1.6 V10.6 M7.6,8 L10.2,11 L12.8,8" fill="none" stroke="#1e1e1e" stroke-width="1.5"/></svg>
<div class="a" style="left:1136.2px;top:354px;width:1px;height:18px;background:#d2d2d8;"></div>
<svg style="left:1144px;top:356.6px;" width="11.6" height="11.6" viewBox="0 0 11.6 11.6"><path d="M1.2,10.4 L6.2,5.4" stroke="#bfbfc4" stroke-width="2.6" stroke-linecap="round"/><path d="M10.6,2.4 A3.4,3.4 0 1 1 8.4,0.4 L7,2.6 L8.6,4 Z" fill="#bfbfc4"/></svg>
<div class="a" style="left:1087px;top:376px;width:193px;height:94.4px;background:#f5f5f5;"></div>
<div class="a" style="left:1087px;top:410px;width:193px;height:1px;background:#ebebee;"></div>
<div class="a" style="left:0px;top:662.4px;width:1280px;height:22px;background:#007acc;"></div>
<div class="t" id="rdy" style="left:3.77px;top:666.05px;font-size:11.4px;color:#fff;transform-origin:0 0;transform:scaleX(0.9281);">Ready</div>
<div class="t" id="ln" style="left:951.94px;top:666.05px;font-size:11.4px;color:#fff;transform-origin:0 0;transform:scaleX(0.9614);">Ln 12</div>
<div class="t" id="col" style="left:1039.36px;top:666.05px;font-size:11.4px;color:#fff;transform-origin:0 0;transform:scaleX(0.9395);">Col 1</div>
<div class="t" id="ch" style="left:1125.66px;top:666.05px;font-size:11.4px;color:#fff;transform-origin:0 0;transform:scaleX(0.9341);">Ch 1</div>
<div class="t" id="ins" style="left:1253.98px;top:666.05px;font-size:11.4px;color:#fff;transform-origin:0 0;transform:scaleX(0.9131);">INS</div>
<div class="a" style="left:0px;top:684.4px;width:1280px;height:35.6px;background:#1e1e1f;"></div>
<svg style="left:14.5px;top:695px;" width="16" height="16.2" viewBox="0 0 16 16.2"><path d="M0,2.3 L6.6,1.3 V7.6 H0 Z M7.6,1.15 L16,0 V7.6 H7.6 Z M0,8.6 H6.6 V14.9 L0,13.9 Z M7.6,8.6 H16 V16.2 L7.6,15.05 Z" fill="#fff"/></svg>
<div class="a" style="left:45px;top:684.4px;width:324.4px;height:35.6px;background:#f2f2f2;"></div>
<svg style="left:57px;top:695.6px;" width="15.6" height="15.6" viewBox="0 0 15.6 15.6"><circle cx="9.6" cy="5.8" r="4.7" fill="none" stroke="#2a2a2a" stroke-width="1.3"/><path d="M6.2,9.4 L0.6,15" stroke="#2a2a2a" stroke-width="1.5"/></svg>
<div class="t" id="srch" style="left:83.08px;top:695.59px;font-size:14.9px;color:#3c3c3c;transform-origin:0 0;transform:scaleX(0.9174);">Type here to search</div>
<svg style="left:383.6px;top:694.9px;" width="15.4" height="15.4" viewBox="0 0 15.4 15.4"><circle cx="7.7" cy="7.7" r="6.2" fill="none" stroke="#fff" stroke-width="2.3"/></svg>
<svg style="left:428.6px;top:695.4px;" width="16.6" height="14.6" viewBox="0 0 16.6 14.6"><rect x="2.6" y="3.6" width="8.6" height="7.4" fill="none" stroke="#fff" stroke-width="1.3"/><path d="M2,0.7 H11.8 M2,13.9 H11.8" stroke="#fff" stroke-width="1.3"/><path d="M14.6,3 V11.6" stroke="#fff" stroke-width="1.8"/><rect x="13.6" y="0" width="2" height="1.6" fill="#fff"/><path d="M0.6,3 V5 M0.6,9.6 V11.6" stroke="#fff" stroke-width="1.2"/></svg>
<svg style="left:473px;top:693px;" width="23.8" height="19" viewBox="0 0 23.8 19"><path d="M0,6.4 L11.9,0 L23.8,6.4 V19 H0 Z" fill="#fff"/><path d="M2.6,6.7 H21.6 L12.4,11.6 L17.6,16 L9.4,10.6 Z" fill="#1e1e1f"/></svg>
<svg style="left:520px;top:693.6px;" width="21.4" height="18" viewBox="0 0 21.4 18"><path d="M0,0 H8 L9.6,2 H21.4 V5 H0 Z" fill="#e9b83a"/><path d="M0,3.4 H21.4 V18 H0 Z" fill="#f7d467"/><path d="M3.4,10 H18 V18 H3.4 Z" fill="#3d8fd6"/><path d="M6.6,12.6 H14.8 V18 H6.6 Z" fill="#f7d467"/><path d="M0,16.4 H21.4 V18 H0 Z" fill="#e0b040" opacity="0.5"/></svg>
<svg style="left:565.5px;top:692.8px;" width="22" height="20" viewBox="0 0 22 20"><rect x="9" y="2.2" width="13" height="15.6" fill="#fff"/><path d="M14,5 H20.4 M14,7.6 H20.4 M14,10.2 H20.4 M14,12.8 H20.4 M14,15.2 H20.4" stroke="#2b579a" stroke-width="1.1"/><path d="M0,2.2 L12.6,0 V20 L0,17.8 Z" fill="#2b579a"/><text x="6.3" y="13.6" font-family="Liberation Sans,sans-serif" font-weight="bold" font-size="9.5" fill="#fff" text-anchor="middle">W</text></svg>
<svg style="left:612px;top:691.5px;" width="22" height="22" viewBox="0 0 22 22"><circle cx="11" cy="11" r="11" fill="#e33b2e"/><path d="M11,11 L1.47,16.5 A11,11 0 0 0 11,22 A11,11 0 0 0 16.5,20.53 Z" fill="#2da94f"/><path d="M11,11 L1.47,16.5 A11,11 0 0 1 1.6,5.3 Z" fill="#2da94f"/><path d="M11,11 L16.5,20.53 A11,11 0 0 0 20.8,6 L11,6 Z" fill="#fcc934"/><path d="M11,11 L11,22 A11,11 0 0 0 16.5,20.53 Z" fill="#fcc934"/><circle cx="11" cy="11" r="5.1" fill="#fff"/><circle cx="11" cy="11" r="4" fill="#4a8af4"/></svg>
<div class="a" style="left:646.2px;top:684.4px;width:45.8px;height:35.6px;background:#3d3d3f;"></div>
<div class="a" style="left:658px;top:692px;width:22px;height:21.8px;background:#0c2a6b;"></div>
<svg style="left:661.4px;top:695px;" width="15.6" height="15.6" viewBox="0 0 15.6 15.6"><path fill="#fff" fill-rule="evenodd" d="M11.6,0 L15.6,1.8 V13.8 L11.6,15.6 L5,9.6 L1.6,12.6 L0,11.8 V3.8 L1.6,3 L5,6 Z M11.6,4.6 L7.8,7.8 L11.6,11 Z M1.7,5.8 V9.8 L3.8,7.8 Z"/></svg>
<svg style="left:703.8px;top:689.6px;" width="22.6" height="24.4" viewBox="0 0 22.6 24.4"><path d="M7,6.6 V4.6 a4.3,4.3 0 0 1 8.6,0 V6.6" fill="none" stroke="#e8e8e8" stroke-width="1.5"/><path d="M0,6.4 H22.6 V22 Q22.6,24.4 20.2,24.4 H2.4 Q0,24.4 0,22 Z" fill="#fff"/><rect x="6" y="10.2" width="4.8" height="4.8" fill="#f25022"/><rect x="11.8" y="10.2" width="4.8" height="4.8" fill="#7fba00"/><rect x="6" y="16" width="4.8" height="4.8" fill="#00a4ef"/><rect x="11.8" y="16" width="4.8" height="4.8" fill="#ffb900"/></svg>
<svg style="left:750.6px;top:691.4px;" width="22.4" height="23" viewBox="0 0 22.4 23"><defs><radialGradient id="ffg" cx="0.6" cy="0.25" r="0.9"><stop offset="0" stop-color="#ffdd44"/><stop offset="0.45" stop-color="#ff8a16"/><stop offset="1" stop-color="#e22850"/></radialGradient></defs><path d="M11.2,23 A11,11 0 0 1 1.6,6.6 Q2.4,5 3.6,3.8 Q3.6,6 4.8,6.8 Q6,3.2 10.4,0 Q10.4,3.6 13.6,5 Q14.6,2.6 14.2,1.2 Q21.6,5 22.2,12 A11,11 0 0 1 11.2,23 Z" fill="url(#ffg)"/><circle cx="11" cy="13" r="5.6" fill="#7a3bd6"/><path d="M5.6,11 Q8,9 10.8,10.2 Q12.8,11.2 12.6,13.2 Q11,12.4 9.6,13.2 Q8.6,15 10.8,16.6 Q6,17 5.6,11 Z" fill="#ff9a1f"/></svg>
<svg style="left:797px;top:692.8px;" width="22" height="20" viewBox="0 0 22 20"><rect x="9" y="2.2" width="13" height="15.6" fill="#fff"/><path d="M13.6,4.6 H20.6 V15.6 H13.6 Z M13.6,7.4 H20.6 M13.6,10.1 H20.6 M13.6,12.8 H20.6 M17.1,4.6 V15.6" fill="none" stroke="#1e7145" stroke-width="1.1"/><path d="M0,2.2 L12.6,0 V20 L0,17.8 Z" fill="#1e7145"/><text x="6.3" y="13.6" font-family="Liberation Sans,sans-serif" font-weight="bold" font-size="9.5" fill="#fff" text-anchor="middle">X</text></svg>
<svg style="left:842.2px;top:691.5px;" width="22" height="22" viewBox="0 0 22 22"><circle cx="11" cy="11" r="10" fill="#1e1e1f" stroke="#fff" stroke-width="1.7"/><circle cx="11" cy="11" r="6.6" fill="#ee1c25"/></svg>
<svg style="left:1006px;top:700px;" width="12" height="6.4" viewBox="0 0 12 6.4"><path d="M0.6,6 L6,0.8 L11.4,6" fill="none" stroke="#fff" stroke-width="1.4"/></svg>
<svg style="left:1028.6px;top:695.4px;" width="11" height="15.4" viewBox="0 0 11 15.4"><rect x="3" y="0" width="5" height="9.4" rx="2.5" fill="#e6e6e6"/><path d="M0.8,6.6 V8 a4.7,4.7 0 0 0 9.4,0 V6.6 M5.5,12.6 V14.8 M2.4,14.9 H8.6" fill="none" stroke="#e6e6e6" stroke-width="1.1"/></svg>
<svg style="left:1050px;top:697.6px;" width="15.4" height="12.4" viewBox="0 0 15.4 12.4"><rect x="0.6" y="0.6" width="11.6" height="7.4" fill="none" stroke="#fff" stroke-width="1.2"/><rect x="2" y="2" width="6" height="4.6" fill="#fff"/><rect x="12.6" y="2.6" width="1.4" height="3.4" fill="#fff"/><circle cx="11.2" cy="8.6" r="3.6" fill="#2ea043"/><path d="M11.2,6.4 L9.6,9 H11 L10.8,10.8 L12.8,8 H11.4 Z" fill="#fff"/></svg>
<svg style="left:1071px;top:696.6px;" width="16.4" height="13.4" viewBox="0 0 16.4 13.4"><path d="M3.8,9.6 A3.2,3.2 0 0 1 4,3.4 A4.3,4.3 0 0 1 12,2.6 A3.4,3.4 0 0 1 13,9.6 Z" fill="#cfcfcf"/><circle cx="11.8" cy="9.4" r="3.8" fill="#8c8c8c"/><path d="M10.6,7.8 V11 M13,7.8 V11" stroke="#fff" stroke-width="1"/></svg>
<svg style="left:1094.4px;top:695.4px;" width="16" height="15.6" viewBox="0 0 16 15.6"><circle cx="7.2" cy="7.2" r="6.4" fill="none" stroke="#fff" stroke-width="1.2"/><ellipse cx="7.2" cy="7.2" rx="2.8" ry="6.4" fill="none" stroke="#fff" stroke-width="1.1"/><path d="M0.8,7.2 H13.6 M1.8,4 H12.6 M1.8,10.4 H12.6" stroke="#fff" stroke-width="1"/><circle cx="12.2" cy="11.8" r="3.4" fill="#1e1e1f" stroke="#fff" stroke-width="1"/><path d="M9.9,9.5 L14.5,14.1" stroke="#fff" stroke-width="1"/></svg>
<svg style="left:1117px;top:696px;" width="15.6" height="13.6" viewBox="0 0 15.6 13.6"><path d="M0.6,4.6 H3.2 L6.6,1.4 V12.2 L3.2,9 H0.6 Z" fill="none" stroke="#fff" stroke-width="1.1"/><path d="M8.6,4.6 Q10.2,6.8 8.6,9 M10.6,2.8 Q13.4,6.8 10.6,10.8 M12.8,1.2 Q16.4,6.8 12.8,12.4" fill="none" stroke="#fff" stroke-width="1"/></svg>
<div class="t" id="eng" style="left:1141.59px;top:695.02px;font-size:11.5px;color:#fff;transform-origin:0 0;transform:scaleX(0.8835);">ENG</div>
<div class="t" id="tm" style="left:1179.55px;top:686.77px;font-size:11.5px;color:#fff;transform-origin:0 0;transform:scaleX(0.9466);">08:50 PM</div>
<div class="t" id="dt" style="left:1174.95px;top:703.52px;font-size:11.5px;color:#fff;transform-origin:0 0;transform:scaleX(0.9469);">02-01-2020</div>
<svg style="left:1247px;top:695px;" width="22" height="21" viewBox="0 0 22 21"><path d="M0.6,0.6 H15.4 V11.4 H5.6 L2.6,14.4 V11.4 H0.6 Z" fill="#fff"/><path d="M3,3.4 H13 M3,5.8 H13 M3,8.2 H13" stroke="#1e1e1f" stroke-width="0.9"/><circle cx="15.2" cy="14.2" r="6.2" fill="#1e1e1f" stroke="#d0d0d0" stroke-width="1.1"/><text x="15.2" y="18" font-family="Liberation Sans,sans-serif" font-size="10.5" fill="#fff" text-anchor="middle">1</text></svg>
</body></html>
